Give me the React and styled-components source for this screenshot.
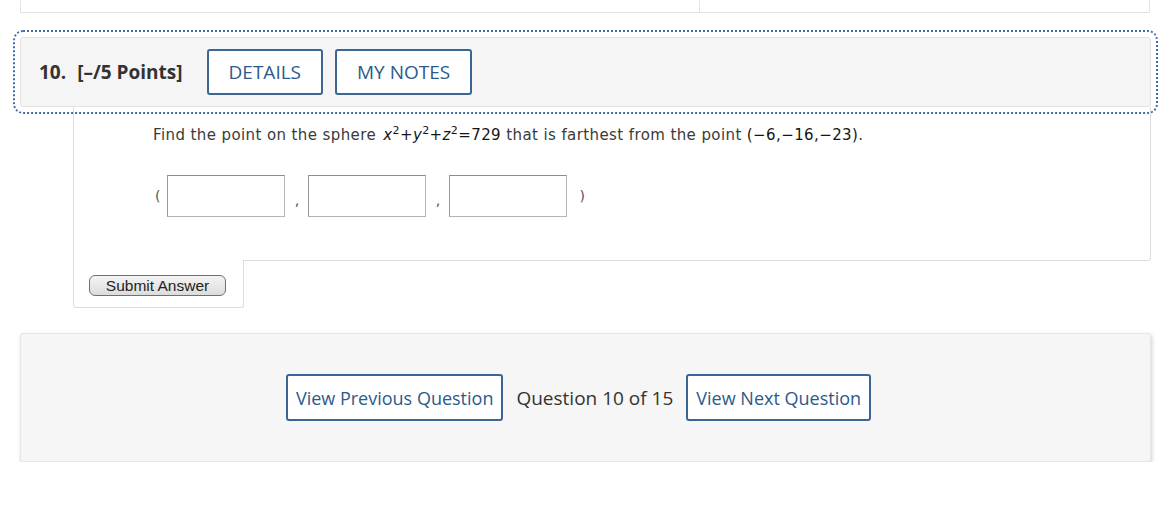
import styled, { createGlobalStyle } from "styled-components";

const GlobalStyle = createGlobalStyle`
  html, body {
    margin: 0;
    padding: 0;
    background: #ffffff;
  }
  body {
    font-family: "Open Sans", "Liberation Sans", sans-serif;
    color: #333333;
  }
`;

const Page = styled.div`
  width: 1131px;
  padding-left: 20px;
`;

const TopCard = styled.div`
  display: grid;
  grid-template-columns: 678px 1fr;
  height: 12px;
  border: 1px solid #e2e2e2;
  border-top: none;
  margin-right: 1px;
`;

const TopCell = styled.div`
  border-left: ${({ $divider }) => ($divider ? "1px solid #e2e2e2" : "none")};
`;

const QuestionHead = styled.div`
  margin-top: 24px;
  height: 68px;
  display: flex;
  align-items: center;
  padding-left: 18px;
  background: #f5f5f5;
  border: 1px solid #e2e2e2;
  border-radius: 3px;
  outline: 2px dotted #3f6fa3;
  outline-offset: 5px;
`;

const QNumber = styled.span`
  font-size: 19px;
  font-weight: 700;
  color: #333333;
  margin-right: 11px;
`;

const QPoints = styled.span`
  font-size: 19px;
  font-weight: 700;
  color: #333333;
  margin-right: 24px;
`;

const OutlineButton = styled.button`
  height: ${({ $h }) => $h || 46}px;
  padding: 0 ${({ $pad }) => $pad || 20}px;
  margin-right: ${({ $gap }) => $gap || 0}px;
  background: #ffffff;
  border: 2px solid #3b6593;
  border-radius: 3px;
  color: #2c5a8b;
  font-family: "Open Sans", "Liberation Sans", sans-serif;
  font-size: ${({ $size }) => $size || 19}px;
  white-space: nowrap;
  cursor: pointer;
`;

const QuestionBody = styled.div`
  margin-left: 53px;
  padding: 18px 0 43px 79px;
  border: 1px solid #dddddd;
  border-top: none;
  border-radius: 0 0 3px 0;
`;

const Prompt = styled.p`
  margin: 0;
  font-family: "DejaVu Sans", Verdana, sans-serif;
  font-size: 15px;
  letter-spacing: 0.4px;
  line-height: 20px;
  color: #3a3a3a;
`;

const MathText = styled.span`
  color: #151515;
  margin-left: ${({ $ml }) => $ml || 0}px;
`;

const Var = styled.i`
  font-style: italic;
`;

const Sup = styled.sup`
  font-size: 11px;
  line-height: 0;
  vertical-align: 6px;
`;

const AnswerRow = styled.div`
  display: flex;
  align-items: center;
  margin-top: 30px;
  font-family: "DejaVu Sans", Verdana, sans-serif;
  font-size: 14px;
  color: #555555;
`;

const Paren = styled.span`
  margin: ${({ $m }) => $m};
`;

const Sep = styled.span`
  width: 23px;
  text-align: center;
  padding-top: 8px;
`;

const AnswerInput = styled.input`
  box-sizing: border-box;
  width: 118px;
  height: 42px;
  margin: 0;
  padding: 0 4px;
  background: #ffffff;
  border: 1px solid #b5b5b5;
  border-top-color: #8c8c8c;
  border-left-color: #9a9a9a;
  border-radius: 0;
`;

const SubmitArea = styled.div`
  position: relative;
  display: flex;
  width: 171px;
  margin: -1px 0 0 53px;
  padding: 15px 0 11px 15px;
  box-sizing: border-box;
  background: #ffffff;
  border: 1px solid #dddddd;
  border-top: none;
  border-radius: 0 0 3px 3px;
`;

const SubmitButton = styled.button`
  width: 137px;
  height: 21px;
  padding: 0;
  background: linear-gradient(#f4f4f4, #dcdcdc);
  border: 1px solid #707070;
  border-radius: 6px;
  font-family: "Liberation Sans", Arial, sans-serif;
  font-size: 15.5px;
  color: #222222;
  line-height: 18px;
  cursor: pointer;
`;

const NavBar = styled.div`
  margin-top: 25px;
  height: 127px;
  display: flex;
  align-items: center;
  justify-content: center;
  padding-right: 14px;
  background: #f6f6f6;
  border: 1px solid #e6e6e6;
  border-radius: 3px;
  box-shadow: 1px 2px 4px rgba(0, 0, 0, 0.18);
`;

const NavCount = styled.span`
  font-size: 19px;
  color: #333333;
  margin: 0 13px;
`;

export default function App() {
  return (
    <>
      <GlobalStyle />
      <Page>
        <TopCard>
          <TopCell />
          <TopCell $divider />
        </TopCard>

        <QuestionHead>
          <QNumber>10.</QNumber>
          <QPoints>[–/5 Points]</QPoints>
          <OutlineButton $gap={12}>DETAILS</OutlineButton>
          <OutlineButton>MY NOTES</OutlineButton>
        </QuestionHead>

        <QuestionBody>
          <Prompt>
            Find the point on the sphere{" "}
            <MathText $ml={2}>
              <Var>x</Var>
              <Sup>2</Sup>+<Var>y</Var>
              <Sup>2</Sup>+<Var>z</Var>
              <Sup>2</Sup>=729
            </MathText>{" "}
            that is farthest from the point <MathText>(−6,−16,−23)</MathText>.
          </Prompt>
          <AnswerRow>
            <Paren $m="0 7px 0 2px">(</Paren>
            <AnswerInput />
            <Sep>,</Sep>
            <AnswerInput />
            <Sep>,</Sep>
            <AnswerInput />
            <Paren $m="0 0 0 12px">)</Paren>
          </AnswerRow>
        </QuestionBody>

        <SubmitArea>
          <SubmitButton>Submit Answer</SubmitButton>
        </SubmitArea>

        <NavBar>
          <OutlineButton $h={47} $pad={8} $size={18}>
            View Previous Question
          </OutlineButton>
          <NavCount>Question 10 of 15</NavCount>
          <OutlineButton $h={47} $pad={8} $size={18}>
            View Next Question
          </OutlineButton>
        </NavBar>
      </Page>
    </>
  );
}
